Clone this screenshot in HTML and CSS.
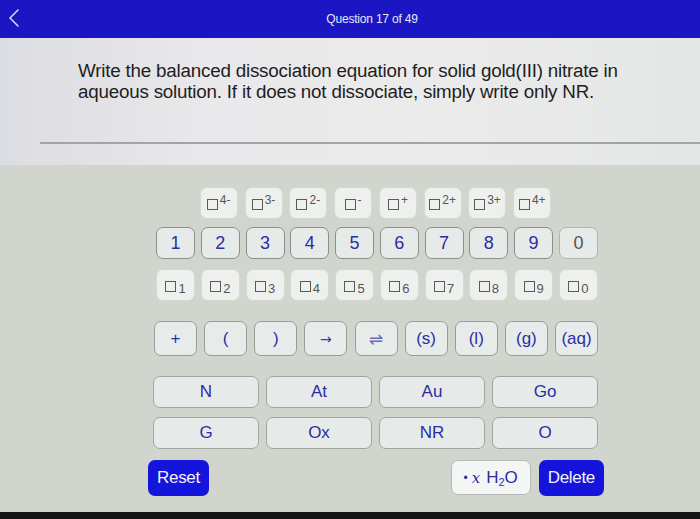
FILE: index.html
```html
<!DOCTYPE html>
<html lang="en">
<head>
<meta charset="utf-8">
<title>Question 17 of 49</title>
<link rel="stylesheet" href="styles.css">
</head>
<body>
<div class="screen">
  <header class="topbar">
    <svg class="back" width="12" height="20" viewBox="0 0 12 20"><path d="M10 2 L2 10 L10 18" fill="none" stroke="#d8d8f4" stroke-width="1.6" stroke-linecap="round" stroke-linejoin="round"/></svg>
    <div class="title">Question 17 of 49</div>
  </header>

  <section class="question">
    <p class="qtext">Write the balanced dissociation equation for solid gold(III) nitrate in aqueous solution. If it does not dissociate, simply write only NR.</p>
    <div class="rule"></div>
  </section>

  <section class="keypad">
    <div class="row row-charge">
      <button class="key soft"><span class="box"></span><span class="sup">4-</span></button>
      <button class="key soft"><span class="box"></span><span class="sup">3-</span></button>
      <button class="key soft"><span class="box"></span><span class="sup">2-</span></button>
      <button class="key soft"><span class="box"></span><span class="sup">-</span></button>
      <button class="key soft"><span class="box"></span><span class="sup">+</span></button>
      <button class="key soft"><span class="box"></span><span class="sup">2+</span></button>
      <button class="key soft"><span class="box"></span><span class="sup">3+</span></button>
      <button class="key soft"><span class="box"></span><span class="sup">4+</span></button>
    </div>
    <div class="row row-digit">
      <button class="key num">1</button>
      <button class="key num">2</button>
      <button class="key num">3</button>
      <button class="key num">4</button>
      <button class="key num">5</button>
      <button class="key num">6</button>
      <button class="key num">7</button>
      <button class="key num">8</button>
      <button class="key num">9</button>
      <button class="key num zero">0</button>
    </div>
    <div class="row row-sub">
      <button class="key soft"><span class="box"></span><span class="sub">1</span></button>
      <button class="key soft"><span class="box"></span><span class="sub">2</span></button>
      <button class="key soft"><span class="box"></span><span class="sub">3</span></button>
      <button class="key soft"><span class="box"></span><span class="sub">4</span></button>
      <button class="key soft"><span class="box"></span><span class="sub">5</span></button>
      <button class="key soft"><span class="box"></span><span class="sub">6</span></button>
      <button class="key soft"><span class="box"></span><span class="sub">7</span></button>
      <button class="key soft"><span class="box"></span><span class="sub">8</span></button>
      <button class="key soft"><span class="box"></span><span class="sub">9</span></button>
      <button class="key soft"><span class="box"></span><span class="sub">0</span></button>
    </div>
    <div class="row row-sym">
      <button class="key sym">+</button>
      <button class="key sym">(</button>
      <button class="key sym">)</button>
      <button class="key sym arrow">&#8594;</button>
      <button class="key sym arrow eq">&#8652;</button>
      <button class="key sym">(s)</button>
      <button class="key sym">(l)</button>
      <button class="key sym">(g)</button>
      <button class="key sym">(aq)</button>
    </div>
    <div class="row row-word">
      <button class="key word">N</button>
      <button class="key word">At</button>
      <button class="key word">Au</button>
      <button class="key word">Go</button>
    </div>
    <div class="row row-word second">
      <button class="key word">G</button>
      <button class="key word">Ox</button>
      <button class="key word">NR</button>
      <button class="key word">O</button>
    </div>
    <div class="row row-actions">
      <button class="action">Reset</button>
      <div class="right-actions">
        <button class="hydrate"><span class="dot">&#8226;</span><span class="x">x</span><span>H<span class="hsub">2</span>O</span></button>
        <button class="action">Delete</button>
      </div>
    </div>
  </section>
  <div class="bottom-strip"></div>
</div>
</body>
</html>
```

FILE: styles.css
```css
* { box-sizing: border-box; }
html, body { margin: 0; padding: 0; }
body {
  width: 700px;
  height: 519px;
  overflow: hidden;
  font-family: "Liberation Sans", Arial, sans-serif;
  background: #d3d5cf;
}
.screen {
  display: flex;
  flex-direction: column;
  height: 519px;
}
.topbar {
  height: 38px;
  background: #1a16c4;
  display: flex;
  align-items: center;
  position: relative;
  flex-shrink: 0;
}
.back {
  position: absolute;
  left: 8px;
  top: 8px;
}
.title {
  width: 100%;
  text-align: center;
  padding-left: 44px;
  color: #e8e8f8;
  font-size: 12px;
  letter-spacing: -0.2px;
}
.question {
  height: 127px;
  background: linear-gradient(90deg, #dcdde2 0%, #e9e8ea 30%, #ecebeb 60%, #e4e6e6 100%);
  padding-top: 22px;
  display: flex;
  flex-direction: column;
  flex-shrink: 0;
}
.qtext {
  margin: 0 0 0 78px;
  width: 556px;
  font-size: 18.8px;
  line-height: 21px;
  color: #1e1e22;
  letter-spacing: -0.2px;
}
.rule {
  margin: 40px 0 0 40px;
  height: 2px;
  background: #a3a4a6;
}
.keypad {
  flex: 1;
  background: #d2d4ce;
  padding: 22px 0 0 153px;
  display: flex;
  flex-direction: column;
}
.row {
  width: 445px;
  display: flex;
  justify-content: space-between;
}
.key {
  font-family: "Liberation Sans", Arial, sans-serif;
  border-radius: 7px;
  display: flex;
  align-items: center;
  justify-content: center;
  padding: 0;
  color: #2c2ca6;
}
.row-charge {
  justify-content: center;
  gap: 6.8px;
  height: 32px;
}
.row-charge .key { width: 38px; height: 32px; }
.soft {
  background: #eef0ee;
  border: 1px solid #d6d8d4;
  color: #555;
}
.box {
  display: inline-block;
  width: 11px;
  height: 11px;
  border: 1px solid #5a5a5a;
  margin-top: 3px;
}
.sup {
  font-size: 12px;
  align-self: flex-start;
  margin-top: 6px;
  margin-left: 2px;
  color: #555;
  line-height: 1;
}
.sub {
  font-size: 13px;
  align-self: flex-end;
  margin-bottom: 5px;
  margin-left: 2px;
  color: #555;
  line-height: 1;
}
.row-digit {
  margin-top: 8px;
  height: 32px;
  padding-left: 3px;
}
.num {
  width: 39px;
  height: 32px;
  background: #e6ebe9;
  border: 1.5px solid #8c8e8a;
  font-size: 18px;
}
.zero { color: #555; border-color: #b2b4b0; }
.row-sub {
  margin-top: 10px;
  height: 32px;
  padding-left: 3px;
}
.row-sub .key { width: 39px; height: 32px; }
.row-sym {
  margin-top: 20px;
  height: 35px;
  padding-left: 1px;
}
.sym {
  width: 43px;
  height: 35px;
  background: #e7ecea;
  border: 1.5px solid #9a9c98;
  font-size: 17px;
}
.sym.arrow {
  font-family: "DejaVu Sans", sans-serif;
  font-size: 14px;
  color: #3a3ab0;
}
.sym.arrow.eq { font-size: 17px; color: #6a6ab8; }
.row-word {
  margin-top: 20px;
  height: 32px;
}
.row-word.second { margin-top: 9px; }
.word {
  width: 106px;
  height: 32px;
  background: #e6ebe9;
  border: 1.5px solid #a2a4a0;
  font-size: 17px;
}
.row-actions {
  margin-top: 10px;
  margin-left: -5px;
  width: 456px;
  height: 37px;
  align-items: center;
}
.action {
  font-family: "Liberation Sans", Arial, sans-serif;
  background: #1414dc;
  color: #f2f2fa;
  border: none;
  border-radius: 7px;
  height: 36px;
  padding: 0 9px;
  font-size: 17px;
  letter-spacing: -0.3px;
}
.right-actions {
  display: flex;
  align-items: center;
  gap: 8px;
}
.hydrate {
  font-family: "Liberation Sans", Arial, sans-serif;
  width: 80px;
  height: 35px;
  background: #f4f6f5;
  border: 1.5px solid #b8bab6;
  border-radius: 7px;
  color: #2c2ca6;
  font-size: 17px;
  display: flex;
  align-items: center;
  justify-content: center;
  gap: 4px;
  padding: 0;
}
.hydrate .dot { font-size: 12px; }
.hydrate .x { font-family: "DejaVu Serif", "Liberation Serif", serif; font-style: italic; font-size: 15px; margin-right: 2px; }
.hsub { font-size: 11px; vertical-align: -3px; }
.bottom-strip {
  height: 7px;
  background: #151515;
  flex-shrink: 0;
}
```
